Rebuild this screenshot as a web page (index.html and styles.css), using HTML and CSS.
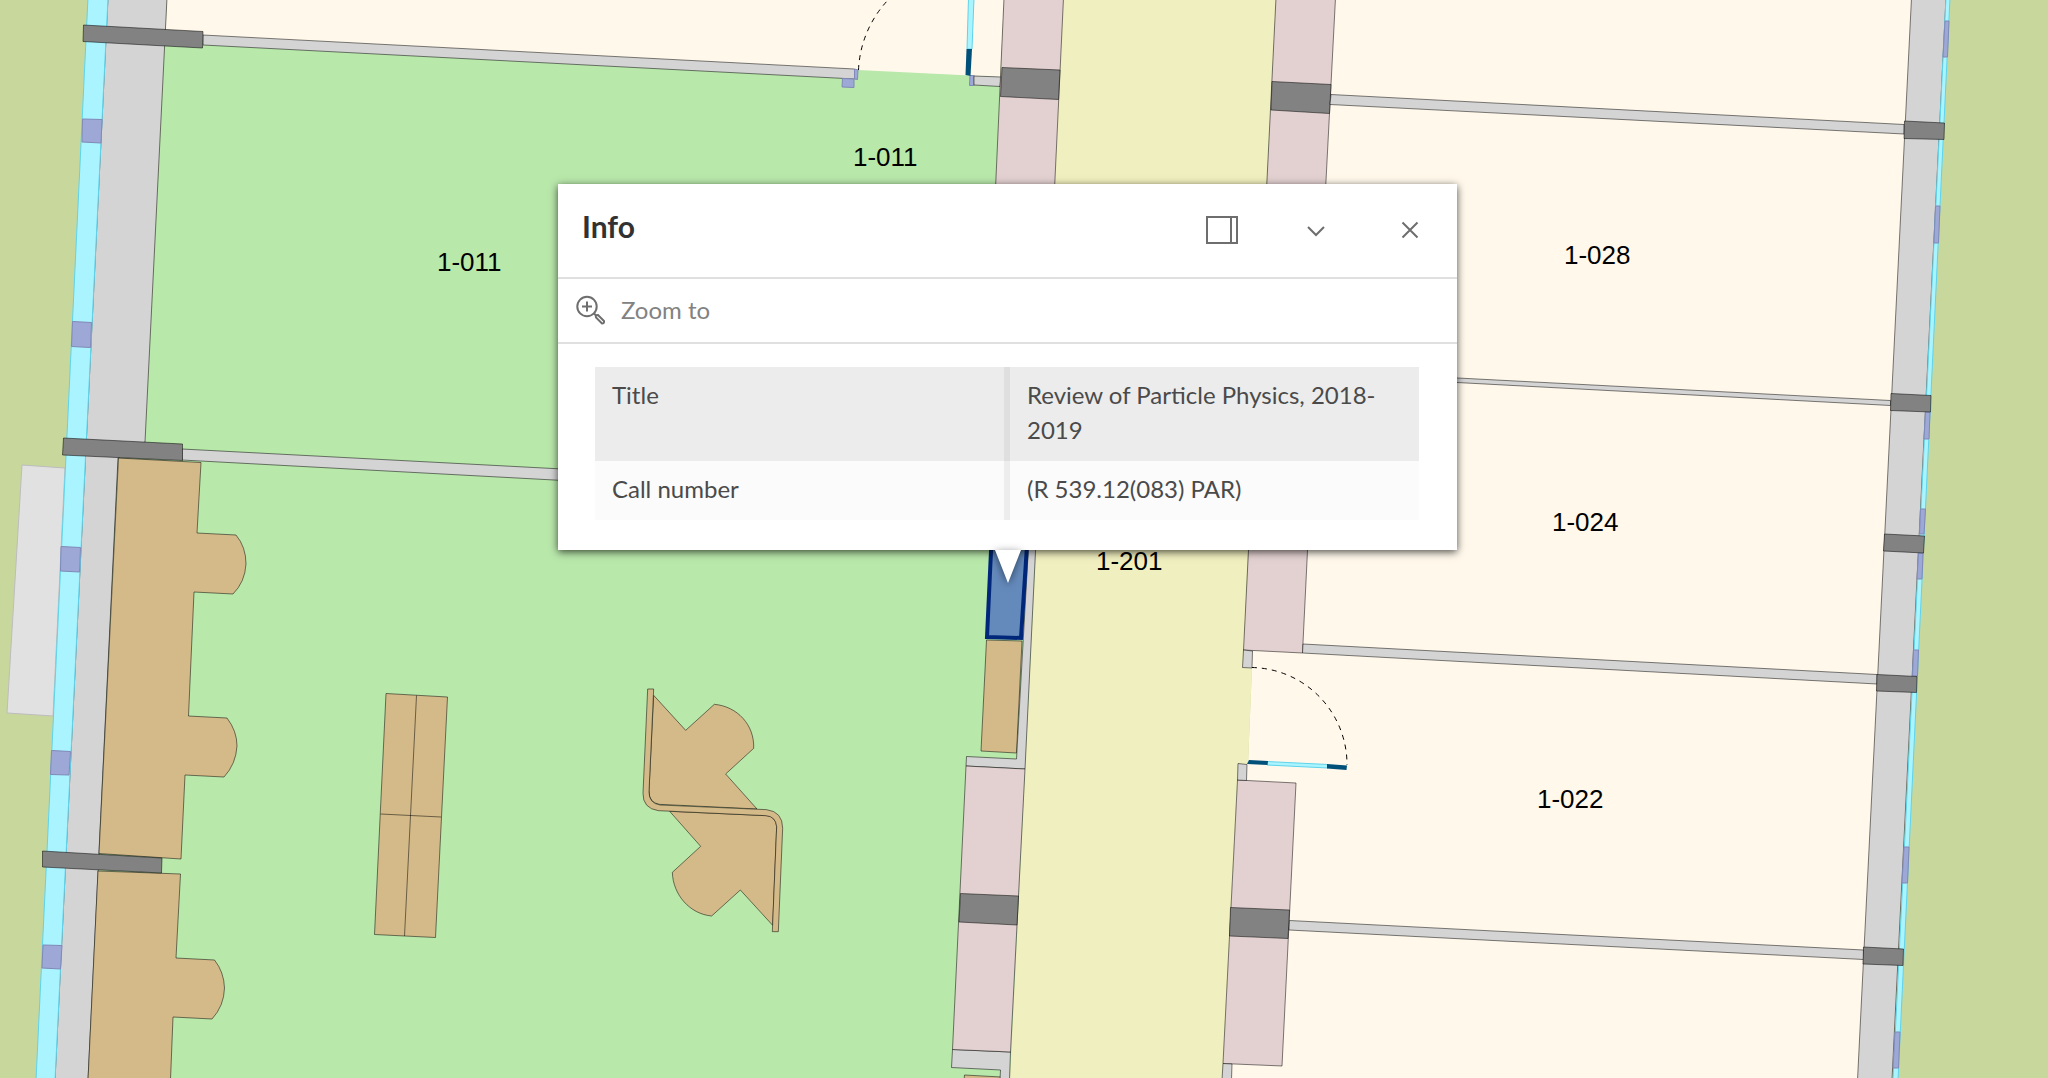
FILE: index.html
```html
<!DOCTYPE html>
<html lang="en">
<head>
<meta charset="utf-8">
<meta name="viewport" content="width=device-width, initial-scale=1">
<title>Floor map</title>
<link rel="stylesheet" href="styles.css">
</head>
<body>
<main class="map">
<svg class="plan" viewBox="0 0 2048 1078" preserveAspectRatio="xMinYMin slice" role="img" aria-label="Floor plan">
  <!-- rooms -->
  <path class="office" d="M167 0H1004L1000 78L203 40L165 46Z"/>
  <path class="library" d="M165 40L203 40L858 70L1001 77L996 184L1036 550L1010 1078H88L118 458L145 442Z"/>
  <path class="office" d="M1335 0H1912L1858 1078H1222L1238 764L1248 764L1252 667L1243 650Z"/>
  <path class="corridor" d="M1063 0H1276L1248 550L1243 667H1252L1248 764H1238L1222 1078H1010L1036 550Z"/>

  <!-- west facade -->
  <path class="balcony" d="M22 465L65 468L53 716L7 713Z"/>
  <path class="wall" d="M108 -2H167L145 442L118 458L88 1080H55Z"/>
  <path class="glass" d="M88 -2H108L55 1080H36Z"/>
  <path class="frame" d="M82.500 119L102 119.500L101 143L82 142ZM72.500 321.500L91.500 322.500L90.500 347.500L71.500 346.500ZM61 546.500L80.500 547.500L79.500 572L60.500 571ZM51.500 750.500L70.500 751.500L69 775L50.500 774.500ZM43 945L62 945.500L60.500 969L42 968Z"/>

  <!-- library walls -->
  <path class="wall" d="M203 35L854.500 69V79L203 45ZM182 449L1000 492V504L182 460Z"/>
  <path class="frame" d="M854.500 69L858 70L857.500 79.500L854.500 79ZM842.500 78.500L854 79V87.500L842 87ZM970 75.500H974V85.500H969.500Z"/>
  <path class="wall" d="M974 76L1001 77L1000 86.500L974 85Z"/>

  <!-- library furniture -->
  <g class="furniture">
    <path d="M118.500 458L201 462.500L197 533L236 535Q246 547 246 564Q245 582 233 594L194 592L188.500 716L227 718Q237 731 237 746Q236 764 224 777L185 775L181 859L99 853.500Z"/>
    <path d="M98 871L180.500 874L176 958L214.500 960Q224 972 224.500 988Q224 1006 212 1019L173 1017L170.500 1080H88Z"/>
    <path d="M386 693.500L447.500 697L435.500 937.500L374.500 934.500ZM416.500 695.500L404.500 936M380.500 814L441 817"/>
    <g transform="translate(600 660) scale(.33333)">
      <path d="M161 106L257 211L343 133C412 139 464 195 461 265L377 342L471 447L178 433Q146 428 147 392Z"/>
      <path d="M209 454L302 559L217 637C219 704 269 762 335 768L421 690L518 796L530 500Q528 470 500 467Z"/>
      <path d="M143 87H161L147 396Q147 430 180 435L500 449Q548 455 548 505L535 815H517L530 500Q527 469 498 467L175 452Q128 445 129 400Z"/>
    </g>
    <path d="M986.500 640L1022 641L1016.500 753L981 751ZM964.500 1075L1001 1077V1080H964Z"/>
  </g>

  <!-- corridor walls, west side -->
  <path class="wall" d="M1030 520H1037L1025 769L966 766L966.500 756.500L1016.500 759ZM952.500 1049.500L1010.500 1052L1009.500 1080H1000L1000.500 1070L951.500 1067.500Z"/>
  <path class="shaft" d="M1004 -2H1063.500L1054 200H995ZM966 766L1025 769L1010.500 1052L952.500 1049.500Z"/>
  <path class="pillar" d="M1002 67.500L1060 70L1058.500 99.500L1000.500 96.500ZM960.500 893.500L1018.500 896L1017 925L959 922Z"/>

  <!-- corridor walls, east side -->
  <path class="shaft" d="M1276 -2H1335.500L1325 200H1266ZM1250 520H1309L1302.500 653L1243.500 650ZM1237.500 780L1296 783L1282 1066L1223 1063.500Z"/>
  <path class="wall" d="M1243.500 650L1252.500 651L1252 668L1242.500 667.500ZM1238 763.500L1247 764.500L1246.500 780.500L1237.500 780ZM1223 1063.500L1232 1064L1231.500 1080H1222Z"/>
  <path class="pillar" d="M1272 81.500L1331 84.500L1329.500 113.500L1271 110ZM1230.500 907.500L1289.500 910L1288 938.500L1229.500 936Z"/>

  <!-- office partitions -->
  <path class="wall" d="M1331 94.500L1904 124.500V134L1330 104.500ZM1400 375L1890.500 400.500V405.500L1400 379.500ZM1303 644L1877 674.500V684L1302.500 653ZM1289.500 920.500L1863.500 950V959.500L1289 930Z"/>

  <!-- east facade -->
  <path class="wall" d="M1911.500 -2H1946L1892 1080H1857.500Z"/>
  <path class="glass" d="M1946 -2H1950L1898 1080H1893Z"/>
  <path class="frame" d="M1945 21H1949L1947.500 57H1943ZM1935.500 206H1940L1938.500 243H1934ZM1925.500 412H1930L1929 439H1924ZM1920.500 509H1925.500L1924 534H1919.500ZM1918.500 553H1923L1922 579H1917ZM1913.500 650H1918.500L1917.500 676H1912.500ZM1904 847H1909L1907.500 883H1902ZM1895 1032H1900L1898.500 1068H1893Z"/>
  <path class="pillar" d="M1904.500 121L1944.500 123L1944 139.500L1904 138.500ZM1891 393.500L1931 395.500L1930.500 412L1890.500 410.500ZM1884.500 534L1924.500 536L1923.500 553L1883.500 551ZM1877 674.500L1917 676.500L1916.500 692.500L1876.500 691ZM1863.500 947L1903.500 949L1903 965.500L1863 964Z"/>
  <path class="pillar" d="M83.500 25L203 31.500L202.500 48L83 41.500ZM63.500 438L182.500 444V460.500L62.500 455ZM42.500 851L162 858L161.500 873L42.500 867Z"/>

  <!-- doors -->
  <path class="swing" d="M858.500 70A109 109 0 0 1 888 0"/>
  <path class="glass" d="M968.500 -2H974L972 49H967Z"/>
  <path class="leaf" d="M966.500 49H972L970.500 76L965.500 75Z"/>
  <path class="swing" d="M1252 667.500A97 97 0 0 1 1347 765"/>
  <path class="glass" d="M1267 761.500L1328 764.500V768L1267 765Z"/>
  <path class="leaf" d="M1249 760L1268 761L1267.500 765L1247 764ZM1327 764L1347 765.500L1346.500 770L1327 768.500Z"/>

  <!-- selected shelf -->
  <path class="selected" d="M992 530H1028L1021 638L987 637Z"/>

  <g class="labels">
    <text x="437" y="271">1-011</text>
    <text x="853" y="166">1-011</text>
    <text x="1564" y="264">1-028</text>
    <text x="1552" y="531">1-024</text>
    <text x="1537" y="808">1-022</text>
    <text x="1096" y="570">1-201</text>
  </g>
</svg>

<section class="popup" aria-labelledby="popup-title">
  <header class="popup-header">
    <h1 class="popup-title" id="popup-title">Info</h1>
    <button class="icon-button" type="button" aria-label="Dock">
      <svg class="icon" viewBox="0 0 32 32"><path d="M1 3H31V29H1ZM25 3V29"/></svg>
    </button>
    <button class="icon-button" type="button" aria-label="Collapse">
      <svg class="icon" viewBox="0 0 32 32"><path d="M8 13L16 21L24 13"/></svg>
    </button>
    <button class="icon-button" type="button" aria-label="Close">
      <svg class="icon" viewBox="0 0 32 32"><path d="M8.500 8.500L23.500 23.500M23.500 8.500L8.500 23.500"/></svg>
    </button>
  </header>
  <div class="actions">
    <button class="action" type="button">
      <svg class="icon" viewBox="0 0 32 32"><circle cx="12" cy="12.500" r="9.700"/><path d="M7 12.500H17M12 7.500V17.500M19 19.500L21.500 22"/><path d="M21 23.500Q20 21 23 21L29 27Q29.500 29.500 27 29.500Z"/></svg>
      <span>Zoom to</span>
    </button>
  </div>
  <table class="fields">
    <tbody>
      <tr><th scope="row">Title</th><td>Review of Particle Physics, 2018-2019</td></tr>
      <tr><th scope="row">Call number</th><td>(R 539.12(083) PAR)</td></tr>
    </tbody>
  </table>
  <svg class="pointer" viewBox="0 0 26 33" aria-hidden="true"><path d="M0 0H26L13 33Z"/></svg>
</section>
</main>
</body>
</html>
```
FILE: styles.css
```css
* {
  box-sizing: border-box;
}

body {
  margin: 0;
  font-family: Lato, "Open Sans", sans-serif;
}

.map {
  position: relative;
  height: 100vh;
  overflow: hidden;
  background: #c8d79c;
}

.plan {
  display: block;
  width: 100%;
  height: 100%;
}

.plan path {
  stroke: rgba(0, 0, 0, 0.5);
  stroke-width: 1px;
  vector-effect: non-scaling-stroke;
}

.plan .office { fill: #fff8eb; stroke: none; }
.plan .library { fill: #b9e8ab; stroke: none; }
.plan .corridor { fill: #f0efbf; stroke: none; }
.plan .balcony { fill: #e1e1e1; stroke: #bdbdbd; }
.plan .wall { fill: #d4d4d4; }
.plan .glass { fill: #aaf4ff; stroke: #5fd3ec; }
.plan .frame { fill: #9da8d6; stroke: #8089b8; }
.plan .furniture path { fill: #d4ba89; }
.plan .shaft { fill: #e3d1d1; }
.plan .pillar { fill: #828282; }
.plan .leaf { fill: #00507a; stroke: none; }
.plan .swing { fill: none; stroke: #000; stroke-dasharray: 5 5; }
.plan .selected { fill: #648abc; stroke: #00277a; stroke-width: 4px; }

.labels {
  font-family: "Liberation Sans", Arial, sans-serif;
  font-size: 26px;
}

.popup {
  position: absolute;
  top: 184px;
  left: 558px;
  width: 899px;
  padding-bottom: 30px;
  background: #fff;
  box-shadow: 0 2px 8px rgba(0, 0, 0, 0.7);
  color: #4a4a4a;
  font-size: 24px;
  line-height: 35px;
}

.popup-header {
  display: flex;
  align-items: center;
  height: 95px;
  border-bottom: 2px solid #e0e0e0;
}

.popup-title {
  flex: 1;
  margin: 0;
  padding: 0 24px 10px;
  color: #323232;
  font-size: 30px;
  line-height: 36px;
}

.icon-button,
.action {
  border: 0;
  background: none;
  font: inherit;
}

.icon-button {
  display: flex;
  align-items: center;
  justify-content: center;
  width: 94px;
  height: 92px;
  padding: 0 0 2px;
}

.icon {
  width: 32px;
  height: 32px;
  fill: none;
  stroke: #6e6e6e;
  stroke-width: 2px;
}

.actions {
  display: flex;
  height: 65px;
  border-bottom: 2px solid #e0e0e0;
}

.action {
  display: flex;
  align-items: center;
  gap: 14px;
  padding: 0 17px 2px;
  color: #828282;
}

.fields {
  width: calc(100% - 75px);
  margin: 23px 37px 0;
  border-collapse: collapse;
  table-layout: fixed;
}

.fields tr:nth-child(odd) { background: #ececec; }
.fields tr:nth-child(even) { background: #fbfbfb; }

.fields th,
.fields td {
  width: 50%;
  padding: 10px 17px 14px;
  font-weight: 400;
  text-align: left;
  vertical-align: top;
}

.fields th {
  border-right: 6px solid rgba(0, 0, 0, 0.055);
}

.pointer {
  position: absolute;
  top: 100%;
  left: 50%;
  width: 26px;
  height: 33px;
  margin-left: -13px;
  fill: #fff;
  filter: drop-shadow(0 2px 4px rgba(0, 0, 0, 0.5));
}
```
